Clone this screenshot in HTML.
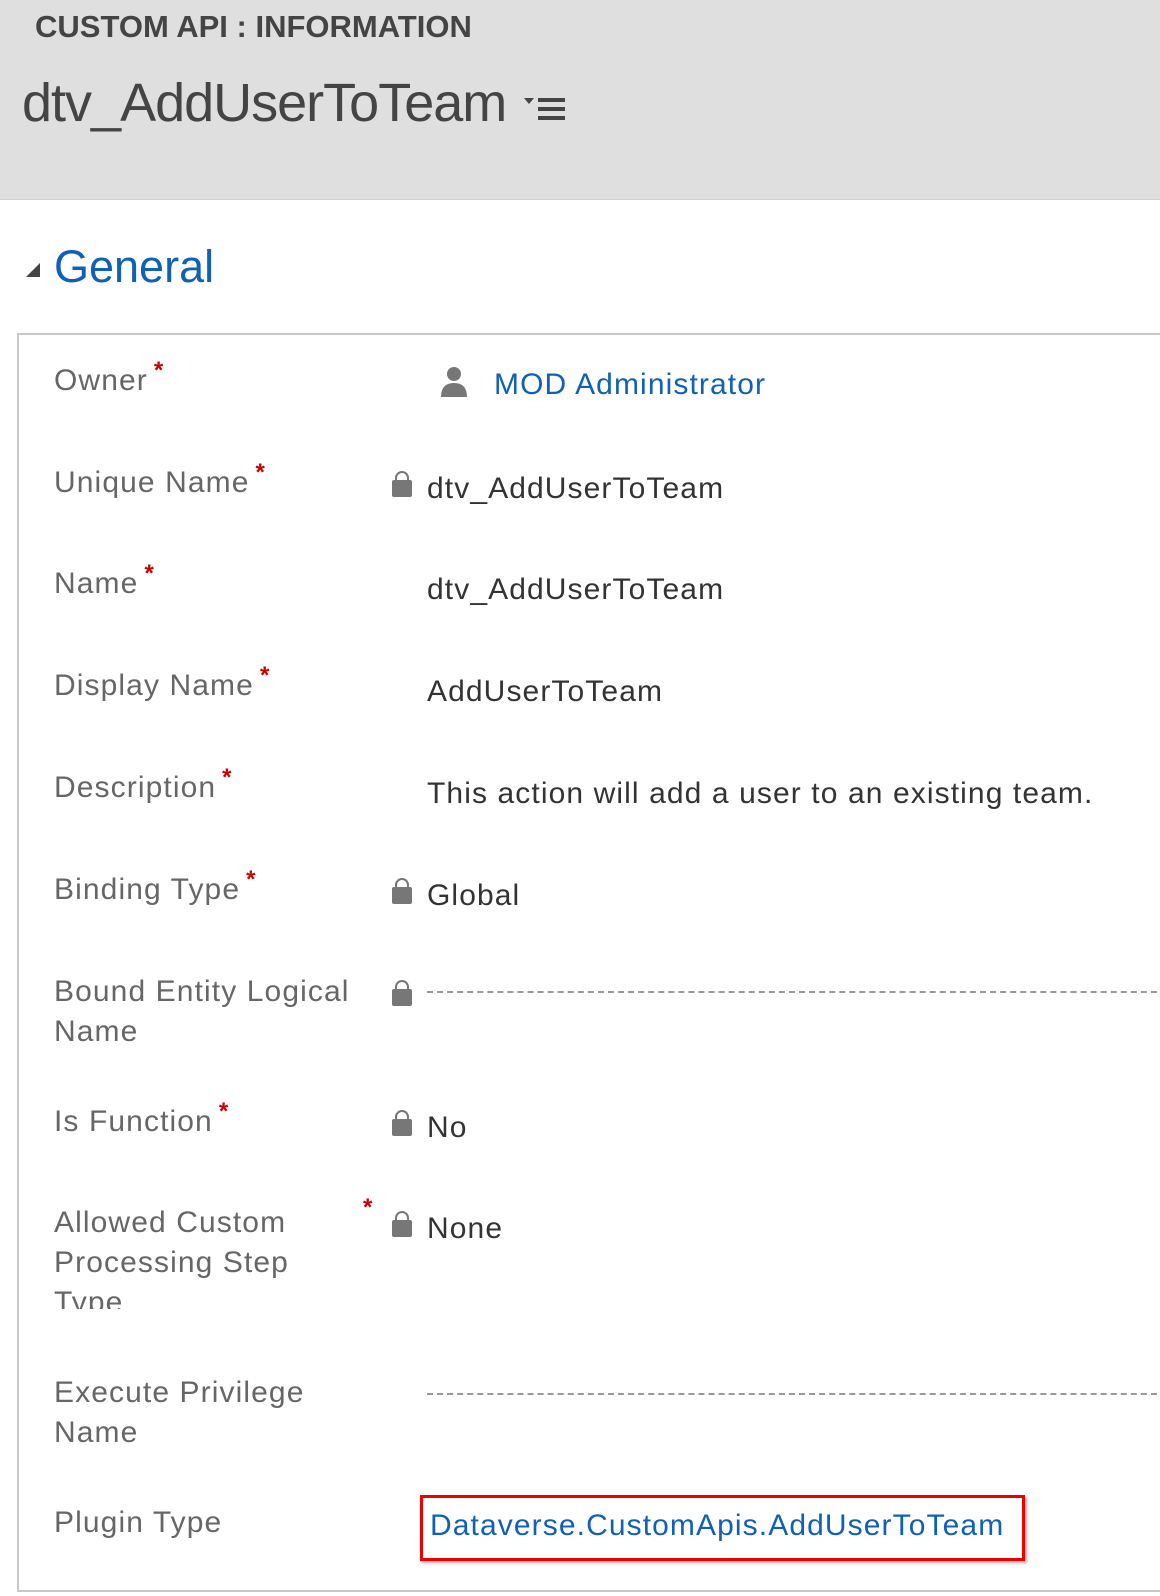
<!DOCTYPE html>
<html><head><meta charset="utf-8"><style>
body{margin:0;width:1160px;height:1596px;background:#fff;font-family:"Segoe UI","Liberation Sans",sans-serif;overflow:hidden;position:relative}
.hdr{position:absolute;left:0;top:0;width:1160px;height:199px;background:#dfdfdf;border-bottom:1px solid #d0d0d0}
.t1{position:absolute;left:35px;top:9px;font-size:31px;font-weight:bold;color:#444}
.t2{position:absolute;left:22px;top:72px;font-size:54px;color:#444;font-weight:300;letter-spacing:-1px}
.gen{position:absolute;left:54px;top:241px;font-size:45px;color:#1160b7}
.tri{position:absolute;left:26px;top:263px;width:0;height:0;border-left:14px solid transparent;border-bottom:14px solid #444}
.box{position:absolute;left:17px;top:333px;width:1160px;height:1255px;border:2px solid #c8c8c8;border-right:none}
.l{position:absolute;left:54px;font-size:30px;color:#666;line-height:40px;width:320px;letter-spacing:1.1px}
.l b{color:#c00;font-size:24px;position:relative;top:-12px;margin-left:6px}
.v{position:absolute;left:427px;font-size:30px;color:#333;line-height:40px;letter-spacing:1.1px}
.lock{position:absolute;left:392px;width:20px;height:17px;background:#777;border-radius:2px}
.lock:before{content:"";position:absolute;left:3px;top:-9px;width:10px;height:10px;border:2px solid #777;border-bottom:none;border-radius:7px 7px 0 0}
.dash{position:absolute;left:427px;width:740px;border-top:2px dashed #999}
</style></head><body>
<div class="hdr"><div class="t1">CUSTOM API : INFORMATION</div><div class="t2">dtv_AddUserToTeam</div>
<svg style="position:absolute;left:524px;top:96px" width="42" height="28"><polygon points="0,2 10,2 5,8" fill="#444"/><rect x="14" y="2" width="27" height="4" fill="#444"/><rect x="14" y="11" width="27" height="4" fill="#444"/><rect x="14" y="20" width="27" height="4" fill="#444"/></svg></div>
<div class="tri"></div><div class="gen">General</div>
<div class="box"></div>
<div class="l" style="top:361px">Owner<b>*</b></div>
<svg style="position:absolute;left:440px;top:366px" width="28" height="32"><circle cx="14" cy="8" r="7" fill="#777"/><path d="M1 31 Q1 17 14 17 Q27 17 27 31Z" fill="#777"/></svg>
<div class="v" style="top:365px;left:494px;color:#1160b7">MOD Administrator</div>
<div class="l" style="top:463px">Unique Name<b>*</b></div><div class="lock" style="top:480px"></div><div class="v" style="top:469px">dtv_AddUserToTeam</div>
<div class="l" style="top:564px">Name<b>*</b></div><div class="v" style="top:570px">dtv_AddUserToTeam</div>
<div class="l" style="top:666px">Display Name<b>*</b></div><div class="v" style="top:672px">AddUserToTeam</div>
<div class="l" style="top:768px">Description<b>*</b></div><div class="v" style="top:774px">This action will add a user to an existing team.</div>
<div class="l" style="top:870px">Binding Type<b>*</b></div><div class="lock" style="top:887px"></div><div class="v" style="top:876px">Global</div>
<div class="l" style="top:972px">Bound Entity Logical Name</div><div class="lock" style="top:989px"></div><div class="dash" style="top:991px"></div>
<div class="l" style="top:1102px">Is Function<b>*</b></div><div class="lock" style="top:1119px"></div><div class="v" style="top:1108px">No</div>
<div class="l" style="top:1203px;height:106px;overflow:hidden;width:265px">Allowed Custom Processing Step Type</div><span style="position:absolute;left:363px;top:1194px;color:#c00;font-size:24px;font-weight:bold">*</span><div class="lock" style="top:1220px"></div><div class="v" style="top:1209px">None</div>
<div class="l" style="top:1373px">Execute Privilege Name</div><div class="dash" style="top:1393px"></div>
<div class="l" style="top:1503px">Plugin Type</div>
<div style="position:absolute;left:420px;top:1495px;width:599px;height:60px;border:3px solid #e00;box-shadow:2px 2px 3px #aaa"></div>
<div class="v" style="top:1506px;left:430px;color:#1160b7">Dataverse.CustomApis.AddUserToTeam</div>
</body></html>
